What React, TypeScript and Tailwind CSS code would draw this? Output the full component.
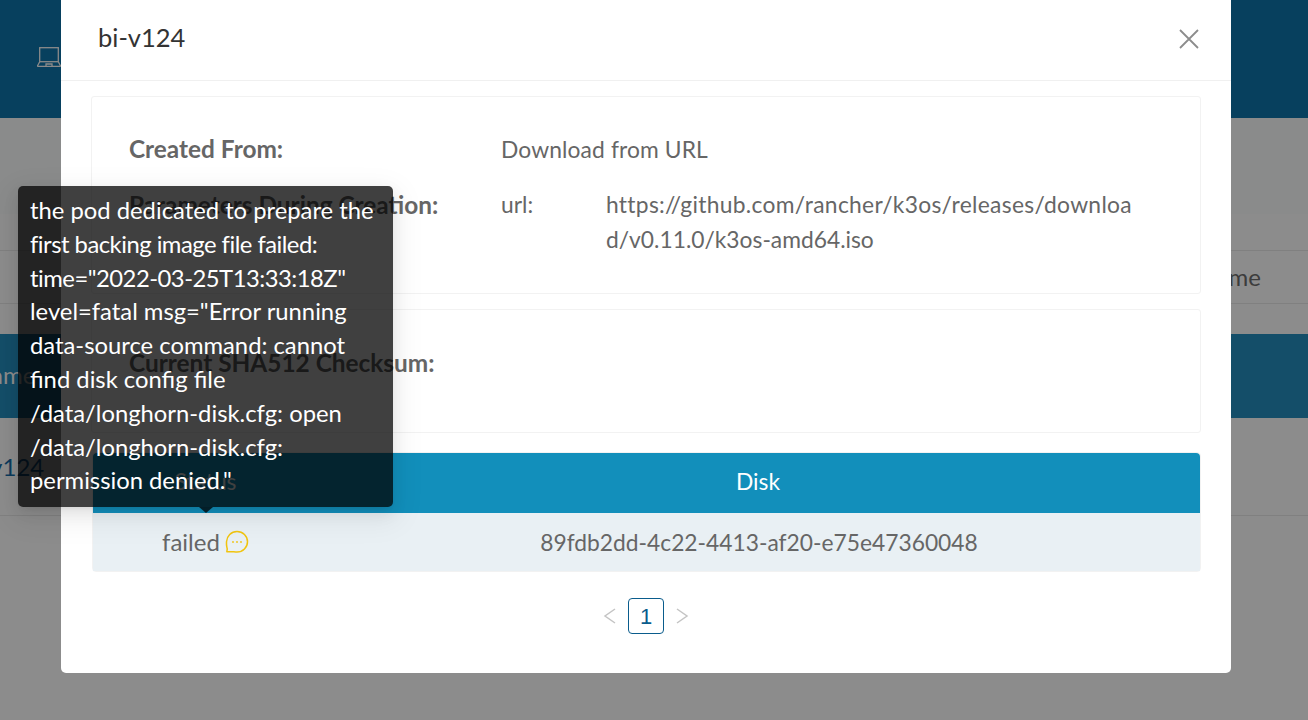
const TOOLTIP_LINES = [
  { text: "the pod dedicated to prepare the", tight: false },
  { text: "first backing image file failed:", tight: true },
  { text: 'time="2022-03-25T13:33:18Z"', tight: true },
  { text: 'level=fatal msg="Error running', tight: false },
  { text: "data-source command: cannot", tight: false },
  { text: "find disk config file", tight: false },
  { text: "/data/longhorn-disk.cfg: open", tight: false },
  { text: "/data/longhorn-disk.cfg:", tight: false },
  { text: 'permission denied."', tight: false },
];

// ─── Page behind the dialog ───────────────────────────────────────────────────
function BackgroundPage() {
  return (
    <div className="flex flex-col h-[720px] bg-[#8c8c8c] text-[#3c3c3c] text-[24px] overflow-hidden">
      <div className="h-[118px] shrink-0 bg-[#07405e] flex items-center pl-[37px] pb-[4px]">
        <svg width="24" height="20" viewBox="0 0 24 20" fill="none" stroke="#8a8a8a" strokeWidth="1.3">
          <rect x="2.700" y="0.700" width="18.600" height="14" />
          <path d="M2.700 14.700L0.700 18.500a.5.5 0 0 0 .5.8h21.600a.5.5 0 0 0 .5-.8L21.300 14.700" />
          <path d="M9 19v-2h6v2" />
        </svg>
      </div>
      <div className="h-[96px] shrink-0 bg-[#8a8b8b]" />
      <div className="h-[36px] shrink-0" />
      <div className="h-[54px] shrink-0 border-y border-[#808080] flex items-center justify-end pr-[47px]">Name</div>
      <div className="h-[30px] shrink-0" />
      <div className="h-[84px] shrink-0 bg-[#144e69] flex items-center text-[#8c8c8c]">
        <span className="ml-[-27px] pb-[2px]">Name</span>
      </div>
      <div className="h-[98px] shrink-0 border-b border-[#808080] flex items-center text-[#0c3b5c]">
        <span className="ml-[-38px]">bi-v124</span>
      </div>
    </div>
  );
}

function CommentIcon() {
  return (
    <svg width="24" height="24" viewBox="0 0 24 24" fill="none" className="text-[#f1c40f]">
      <path d="M12 1.500c5.900 0 10.500 4.500 10.500 10.200S17.900 22 12 22c-2.800 0-6-.6-10.200-.3.800-1.700.7-3.100 0-4.800C1.500 15.300 1.400 13.400 1.500 11.700 1.800 6 6.200 1.500 12 1.500Z" stroke="currentColor" strokeWidth="1.500" strokeLinejoin="round" />
      <circle cx="8" cy="12" r="0.900" fill="currentColor" />
      <circle cx="12" cy="12" r="0.900" fill="currentColor" />
      <circle cx="16" cy="12" r="0.900" fill="currentColor" />
    </svg>
  );
}

// ─── Dialog ───────────────────────────────────────────────────────────────────
function Dialog() {
  return (
    <div className="absolute left-[61px] top-0 w-[1170px] h-[673px] bg-white rounded-b-[5px] flex flex-col">
      <div className="h-[81px] shrink-0 border-b border-[#f0f0f0] flex items-center justify-between pl-[37px] pr-[32px] pb-[5px] text-[25.500px] text-[#333]">
        <span>bi-v124</span>
        <svg width="20" height="20" viewBox="0 0 20 20" className="text-[#8c8c8c] mt-[3px]" stroke="currentColor" strokeWidth="1.800" fill="none">
          <path d="M1 1l18 18M19 1L1 19" />
        </svg>
      </div>

      <div className="flex flex-col px-[30px] pt-[15px] text-[22.800px] text-[#666]">
        <div className="h-[198px] border border-[#f2f2f2] rounded-[3px] pl-[37px] pr-[40px] pt-[34px]">
          <div className="flex h-[56px] leading-[36px]">
            <span className="w-[372px] shrink-0 font-bold text-[24.400px] whitespace-nowrap">Created From:</span>
            <span className="tracking-[0.12px]">Download from URL</span>
          </div>
          <div className="flex leading-[35px]">
            <span className="w-[372px] shrink-0 font-bold text-[24.400px] whitespace-nowrap">Parameters During Creation:</span>
            <span className="w-[105px] shrink-0">url:</span>
            <div className="whitespace-nowrap">
              <div className="tracking-[0.31px]">https://github.com/rancher/k3os/releases/downloa</div>
              <div>d/v0.11.0/k3os-amd64.iso</div>
            </div>
          </div>
        </div>

        <div className="mt-[15px] h-[124px] border border-[#f2f2f2] rounded-[3px] pl-[37px] pb-[15px] flex items-center">
          <span className="font-bold text-[24.400px]">Current SHA512 Checksum:</span>
        </div>

        <div className="mt-[19px] ml-px border border-[#f2f2f2] rounded-[4px]">
          <div className="flex h-[60px] bg-[#128fbb] text-white rounded-t-[4px] items-center text-center pb-[4px]">
            <span className="w-[225px]">Status</span>
            <span className="flex-1 pr-[2px]">Disk</span>
          </div>
          <div className="flex h-[58px] bg-[#e9f0f4] items-center text-center">
            <span className="w-[225px] flex items-center justify-center gap-[5px] text-[24px]">
              failed <CommentIcon />
            </span>
            <span className="flex-1">89fdb2dd-4c22-4413-af20-e75e47360048</span>
          </div>
        </div>

        <div className="mt-[26px] flex items-center justify-center gap-[12px] text-[#c4c4c4]">
          <svg width="13" height="16" viewBox="0 0 13 16" fill="none" stroke="currentColor" strokeWidth="1.500"><path d="M12 1L2 8l10 7" /></svg>
          <span className="w-[36px] h-[36px] border border-[#0a5c8c] rounded-[4px] flex items-center justify-center text-[#0a5c8c] text-[22px] font-['Liberation_Sans',sans-serif]">1</span>
          <svg width="13" height="16" viewBox="0 0 13 16" fill="none" stroke="currentColor" strokeWidth="1.500"><path d="M1 1l10 7-10 7" /></svg>
        </div>
      </div>
    </div>
  );
}

function Tooltip() {
  return (
    <div className="absolute left-[18px] top-[186px] w-[375px] h-[321px] bg-black/75 rounded-[5px] px-[12px] pt-[8px] text-white text-[23.800px] leading-[33.800px] shadow-[0_9px_28px_8px_rgba(0,0,0,0.05),0_6px_16px_rgba(0,0,0,0.08),0_3px_6px_-4px_rgba(0,0,0,0.12)]">
      {TOOLTIP_LINES.map((line) => (
        <div key={line.text} className={line.tight ? "whitespace-nowrap tracking-[-0.5px]" : "whitespace-nowrap"}>{line.text}</div>
      ))}
      <div className="absolute left-[181px] bottom-[-6px] w-0 h-0 border-x-[7px] border-x-transparent border-t-[6px] border-t-black/75" />
    </div>
  );
}

export default function App() {
  return (
    <div className="relative w-[1308px] h-[720px] overflow-hidden font-['Lato',sans-serif]">
      <BackgroundPage />
      <Dialog />
      <Tooltip />
    </div>
  );
}
